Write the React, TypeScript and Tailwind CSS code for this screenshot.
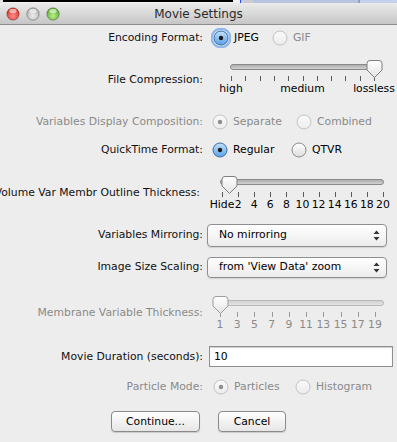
import React from 'react';

type RadioProps = { checked?: boolean; disabled?: boolean; focus?: boolean };

const Radio = ({ checked, disabled, focus }: RadioProps) => {
  const id = `r${checked ? 1 : 0}${disabled ? 1 : 0}${focus ? 1 : 0}`;
  let stroke = '#8c8c8c';
  let top = '#ffffff';
  let bottom = '#dcdcdc';
  if (checked && !disabled) {
    stroke = '#3d6ea8';
    top = '#c4e2fb';
    bottom = '#5aa0e6';
  }
  if (disabled) {
    stroke = '#c2c2c2';
    top = '#fafafa';
    bottom = '#ececec';
  }
  return (
    <svg width="20" height="20" viewBox="0 0 20 20" className="shrink-0">
      <defs>
        <linearGradient id={id} x1="0" y1="0" x2="0" y2="1">
          <stop offset="0" stopColor={top} />
          <stop offset="1" stopColor={bottom} />
        </linearGradient>
      </defs>
      {focus && <circle cx="10" cy="10" r="9.3" fill="none" stroke="#7fb0e8" strokeWidth="2.4" opacity="0.85" />}
      <circle cx="10" cy="10" r="7" fill={`url(#${id})`} stroke={stroke} strokeWidth="1" />
      {checked && <circle cx="10" cy="10" r="2.2" fill={disabled ? '#8e8e8e' : '#1b1b1b'} />}
    </svg>
  );
};

type OptionProps = RadioProps & { text: string; className?: string };

const Option = ({ text, className = '', ...r }: OptionProps) => (
  <div className={`flex items-center gap-[3px] ${className}`}>
    <Radio {...r} />
    <span className={r.disabled ? 'text-[#8a8a8a]' : 'text-black'}>{text}</span>
  </div>
);

const Label = ({ children, disabled, className = '' }: { children: React.ReactNode; disabled?: boolean; className?: string }) => (
  <div className={`flex w-[203px] shrink-0 justify-end whitespace-nowrap ${disabled ? 'text-[#8a8a8a]' : 'text-[#111]'} ${className}`}>
    {children}
  </div>
);

type SliderProps = {
  ticks: number[];
  thumb: number;
  track: [number, number];
  trackY: number;
  labels: string[];
  labelsClass: string;
  disabled?: boolean;
  id: string;
};

const Slider = ({ ticks, thumb, track, trackY, labels, labelsClass, disabled, id }: SliderProps) => {
  const l = thumb - 7.5;
  const r = thumb + 7.5;
  const t = 1.5;
  return (
    <div className="flex flex-col">
      <svg width="189" height="22" viewBox="0 0 189 22">
        <defs>
          <linearGradient id={`${id}t`} x1="0" y1="0" x2="0" y2="1">
            <stop offset="0" stopColor={disabled ? '#cfcfcf' : '#a9a9a9'} />
            <stop offset="1" stopColor={disabled ? '#e6e6e6' : '#d6d6d6'} />
          </linearGradient>
          <linearGradient id={`${id}k`} x1="0" y1="0" x2="0" y2="1">
            <stop offset="0" stopColor="#ffffff" />
            <stop offset="1" stopColor="#e4e4e4" />
          </linearGradient>
        </defs>
        <rect
          x={track[0] + 0.5}
          y={trackY - 2.5}
          width={track[1] - track[0]}
          height="5"
          rx="2.5"
          fill={`url(#${id}t)`}
          stroke={disabled ? '#b9b9b9' : '#8a8a8a'}
        />
        {ticks.map((x, i) => (
          <line
            key={i}
            x1={Math.round(x) + 0.5}
            x2={Math.round(x) + 0.5}
            y1="17"
            y2="22"
            stroke={disabled ? '#9a9a9a' : '#5a5a5a'}
            strokeWidth="1"
          />
        ))}
        <path
          d={`M${l},${t + 3} Q${l},${t} ${l + 3},${t} H${r - 3} Q${r},${t} ${r},${t + 3} V11 L${thumb},18.5 L${l},11 Z`}
          fill={`url(#${id}k)`}
          stroke={disabled ? '#9c9c9c' : '#7e7e7e'}
          strokeWidth="1"
        />
      </svg>
      <div className={`flex h-[16px] items-center justify-between ${labelsClass} ${disabled ? 'text-[#8a8a8a]' : 'text-black'}`}>
        {labels.map((s, i) => (
          <div key={i} className="flex w-0 justify-center whitespace-nowrap">
            {s}
          </div>
        ))}
      </div>
    </div>
  );
};

const range = (start: number, step: number, n: number) => Array.from({ length: n }, (_, i) => start + i * step);

const Arrows = () => (
  <svg width="7" height="11" viewBox="0 0 7 11" className="ml-auto mr-[6px]">
    <path d="M3.5,0.5 L6.5,4 H0.5 Z" fill="#333" />
    <path d="M3.5,10.5 L6.5,7 H0.5 Z" fill="#333" />
  </svg>
);

const Select = ({ value, className = '' }: { value: string; className?: string }) => (
  <div
    className={`ml-[4px] flex w-[180px] items-center rounded-[4px] border border-[#8f8f8f] bg-gradient-to-b from-white to-[#ececec] pl-[11px] shadow-[0_1px_1px_rgba(0,0,0,0.12)] ${className}`}
  >
    <span>{value}</span>
    <Arrows />
  </div>
);

const Light = ({ c1, c2, id }: { c1: string; c2: string; id: string }) => (
  <svg width="14" height="14" viewBox="0 0 14 14">
    <defs>
      <radialGradient id={id} cx="0.5" cy="0.65" r="0.6">
        <stop offset="0" stopColor={c1} />
        <stop offset="1" stopColor={c2} />
      </radialGradient>
    </defs>
    <circle cx="7" cy="7" r="6.2" fill={`url(#${id})`} stroke="rgba(0,0,0,0.35)" strokeWidth="0.8" />
    <ellipse cx="7" cy="4" rx="3.6" ry="2.2" fill="white" opacity="0.55" />
  </svg>
);

export default function App() {
  return (
    <div className="h-[442px] w-[397px] overflow-hidden bg-[#ededed] font-['DejaVu_Sans',sans-serif] text-[10.8px] leading-[16px]">
      {/* window behind */}
      <div className="flex h-[3px]">
        <div className="w-[3px] bg-[#e4e4e4]" />
        <div className="w-[230px] border-t-[2px] border-black bg-[#f2f2f2]" />
        <div className="w-[7px] bg-[#f2f2f2]" />
        <div className="w-[1px] bg-[#2a4cf0]" />
        <div className="w-[12px] bg-[#c9ccd4]" />
        <div className="w-[105px] bg-[#b9c3e2]" />
        <div className="w-[2px] bg-[#9aa0b0]" />
        <div className="flex-1 bg-[#c6cfee]" />
      </div>

      {/* title bar */}
      <div className="relative flex h-[22px] items-center rounded-t-[5px] border-b border-[#8d8d8d] bg-gradient-to-b from-[#ebebeb] to-[#c6c6c6]">
        <div className="flex items-center gap-[6px] pl-[6px] pt-[1px]">
          <Light id="lr" c1="#ff8f88" c2="#d8342c" />
          <Light id="lg" c1="#eeeeee" c2="#b3b3b3" />
          <Light id="lgr" c1="#b9ee8c" c2="#5cae2e" />
        </div>
        <div className="absolute inset-x-0 top-[2px] text-center text-[12px] leading-[18px] text-[#2a2a2a]">Movie Settings</div>
      </div>

      {/* Encoding Format */}
      <div className="flex h-[26px] items-center">
        <Label>Encoding Format:</Label>
        <div className="ml-[8px] flex">
          <Option text="JPEG" checked focus className="w-[59px]" />
          <Option text="GIF" disabled />
        </div>
      </div>

      {/* File Compression */}
      <div className="flex h-[53px] items-start">
        <Label className="pt-[21px]">File Compression:</Label>
        <div className="ml-[5px] pt-[8px]">
          <Slider
            id="fc"
            ticks={range(23, 14.3, 11)}
            thumb={166.5}
            track={[22, 172]}
            trackY={8}
            labels={['high', 'medium', 'lossless']}
            labelsClass="ml-[23px] w-[143px]"
          />
        </div>
      </div>

      {/* Variables Display Composition */}
      <div className="flex h-[36px] items-center">
        <Label disabled>Variables Display Composition:</Label>
        <div className="ml-[7px] flex">
          <Option text="Separate" checked disabled className="w-[84px]" />
          <Option text="Combined" disabled />
        </div>
      </div>

      {/* QuickTime Format */}
      <div className="flex h-[20px] items-center">
        <Label>QuickTime Format:</Label>
        <div className="ml-[7px] flex">
          <Option text="Regular" checked className="w-[79px]" />
          <Option text="QTVR" />
        </div>
      </div>

      {/* Volume Var Membr Outline Thickness */}
      <div className="flex h-[58px] items-start">
        <Label className="pr-[3px] pt-[25px]">Volume Var Membr Outline Thickness:</Label>
        <div className="ml-[5px] pt-[15px]">
          <Slider
            id="vv"
            ticks={range(14, 16.1, 11)}
            thumb={21.5}
            track={[12, 175]}
            trackY={7}
            labels={['Hide', '2', '4', '6', '8', '10', '12', '14', '16', '18', '20']}
            labelsClass="ml-[14px] w-[161px]"
          />
        </div>
      </div>

      {/* Variables Mirroring */}
      <div className="flex h-[34px] items-center">
        <Label>Variables Mirroring:</Label>
        <Select value="No mirroring" className="h-[23px]" />
      </div>

      {/* Image Size Scaling */}
      <div className="flex h-[30px] items-center">
        <Label>Image Size Scaling:</Label>
        <Select value="from 'View Data' zoom" className="h-[21px]" />
      </div>

      {/* Membrane Variable Thickness */}
      <div className="flex h-[55px] items-start">
        <Label disabled className="pt-[23px]">Membrane Variable Thickness:</Label>
        <div className="ml-[5px] pt-[13px]">
          <Slider
            id="mv"
            disabled
            ticks={range(12, 17.22, 10)}
            thumb={12.5}
            track={[5, 175]}
            trackY={8}
            labels={['1', '3', '5', '7', '9', '11', '13', '15', '17', '19']}
            labelsClass="ml-[12px] w-[155px]"
          />
        </div>
      </div>

      {/* Movie Duration */}
      <div className="flex h-[39px] items-center">
        <Label>Movie Duration (seconds):</Label>
        <div className="ml-[6px] flex h-[21px] w-[184px] items-center border border-[#8f8f8f] bg-white pl-[4px] shadow-[inset_0_1px_1px_rgba(0,0,0,0.2)]">
          10
        </div>
      </div>

      {/* Particle Mode */}
      <div className="flex h-[22px] items-center">
        <Label disabled>Particle Mode:</Label>
        <div className="ml-[8px] flex">
          <Option text="Particles" checked disabled className="w-[82px]" />
          <Option text="Histogram" disabled />
        </div>
      </div>

      {/* Buttons */}
      <div className="flex justify-center gap-[18px] pt-[13px]">
        <button className="flex h-[21px] w-[89px] items-center justify-center rounded-[4px] border border-[#8a8a8a] bg-gradient-to-b from-white to-[#e6e6e6] shadow-[0_1px_1px_rgba(0,0,0,0.15)]">
          Continue...
        </button>
        <button className="flex h-[21px] w-[68px] items-center justify-center rounded-[4px] border border-[#8a8a8a] bg-gradient-to-b from-white to-[#e6e6e6] shadow-[0_1px_1px_rgba(0,0,0,0.15)]">
          Cancel
        </button>
      </div>
    </div>
  );
}
